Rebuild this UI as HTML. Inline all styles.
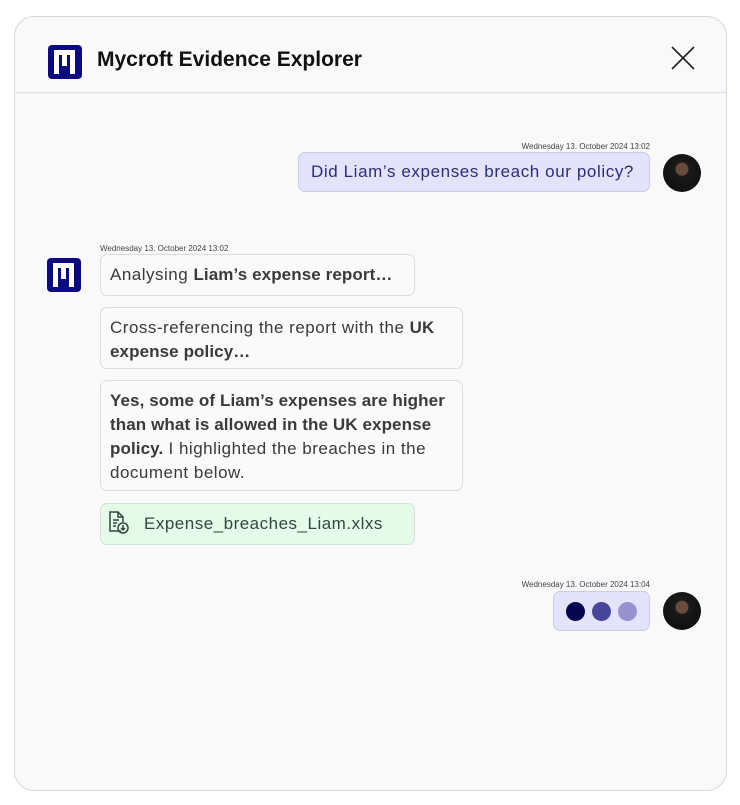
<!DOCTYPE html>
<html><head><style>
body{margin:0;width:740px;height:805px;background:#fff;font-family:"Liberation Sans",sans-serif;position:relative;overflow:hidden}
.card{position:absolute;left:14px;top:16px;width:711px;height:773px;border:1px solid #d6d8e0;border-radius:20px;background:#f9f9fa}
.hdr{position:absolute;left:0;top:0;width:711px;height:75px;border-bottom:1.5px solid #dde0ea}
.a{position:absolute}
.logo{position:absolute;width:34px;height:34px;background:#0b0a80;border-radius:4px}
.logo i{position:absolute;background:#fff;width:5px}
.ts{position:absolute;font-size:8px;color:#444;white-space:nowrap}
.b{position:absolute;box-sizing:border-box;border:1px solid #dcdde3;border-radius:7px;background:#fafafa;font-size:17px;line-height:24px;color:#3a3a3a;padding:8px 9px;letter-spacing:0.5px}
.b b{letter-spacing:0.1px}
.av{position:absolute;width:38px;height:38px;border-radius:50%;background:radial-gradient(circle at 50% 40%,#6a4a3a 0 6px,#1a1a1a 7px,#0a0a0a)}
.d{position:absolute;width:19px;height:19px;border-radius:50%;top:10px}
</style></head><body>
<div class="card">
<div class="hdr"></div>
<div class="logo" style="left:33px;top:28px"><i style="left:6px;top:5px;height:24px"></i><i style="left:14px;top:5px;height:16px"></i><i style="left:22px;top:5px;height:24px"></i><i style="left:6px;top:5px;height:5px;width:21px"></i></div>
<div class="a" style="left:82px;top:31px;font-size:21px;font-weight:bold;color:#111">Mycroft Evidence Explorer</div>
<svg class="a" style="left:655px;top:28px" width="26" height="26"><path d="M2 2L24 24M24 2L2 24" stroke="#222" stroke-width="1.6"/></svg>
</div>
<div class="ts" style="right:90px;top:142px">Wednesday 13. October 2024 13:02</div>
<div class="b" style="left:298px;top:152px;width:352px;height:40px;background:#e3e3fb;border-color:#c9caee;color:#2d2d7a;padding:7px 12px;letter-spacing:0.6px;white-space:nowrap">Did Liam’s expenses breach our policy?</div>
<div class="av" style="left:663px;top:154px"></div>
<div class="ts" style="left:100px;top:244px">Wednesday 13. October 2024 13:02</div>
<div class="logo" style="left:47px;top:258px"><i style="left:6px;top:5px;height:24px"></i><i style="left:14px;top:5px;height:16px"></i><i style="left:22px;top:5px;height:24px"></i><i style="left:6px;top:5px;height:5px;width:21px"></i></div>
<div class="b" style="left:100px;top:254px;width:315px;height:42px">Analysing <b>Liam’s expense report…</b></div>
<div class="b" style="left:100px;top:307px;width:363px;height:62px">Cross-referencing the report with the <b>UK expense policy…</b></div>
<div class="b" style="left:100px;top:380px;width:363px;height:111px"><b>Yes, some of Liam’s expenses are higher than what is allowed in the UK expense policy.</b> I highlighted the breaches in the document below.</div>
<div class="b" style="left:100px;top:503px;width:315px;height:42px;background:#e6fbe9;border-color:#cfe6d4;color:#2f4a38;padding-left:43px">Expense_breaches_Liam.xlxs</div>
<svg class="a" style="left:108px;top:511px" width="22" height="24" fill="none" stroke="#2f4a38" stroke-width="1.5"><path d="M13 20H2V1h8l5 5v5M10 1v5h5M5 9h6M5 12h4M5 15h3"/><circle cx="15" cy="17" r="5"/><path d="M15 14v5M13 17l2 2 2-2"/></svg>
<div class="ts" style="right:90px;top:580px">Wednesday 13. October 2024 13:04</div>
<div class="b" style="left:553px;top:591px;width:97px;height:40px;background:#e3e3fb;border-color:#c9caee">
<div class="d" style="left:12px;background:#07044f"></div><div class="d" style="left:38px;background:#49459a"></div><div class="d" style="left:64px;background:#9893d0"></div></div>
<div class="av" style="left:663px;top:592px"></div>
</body></html>
